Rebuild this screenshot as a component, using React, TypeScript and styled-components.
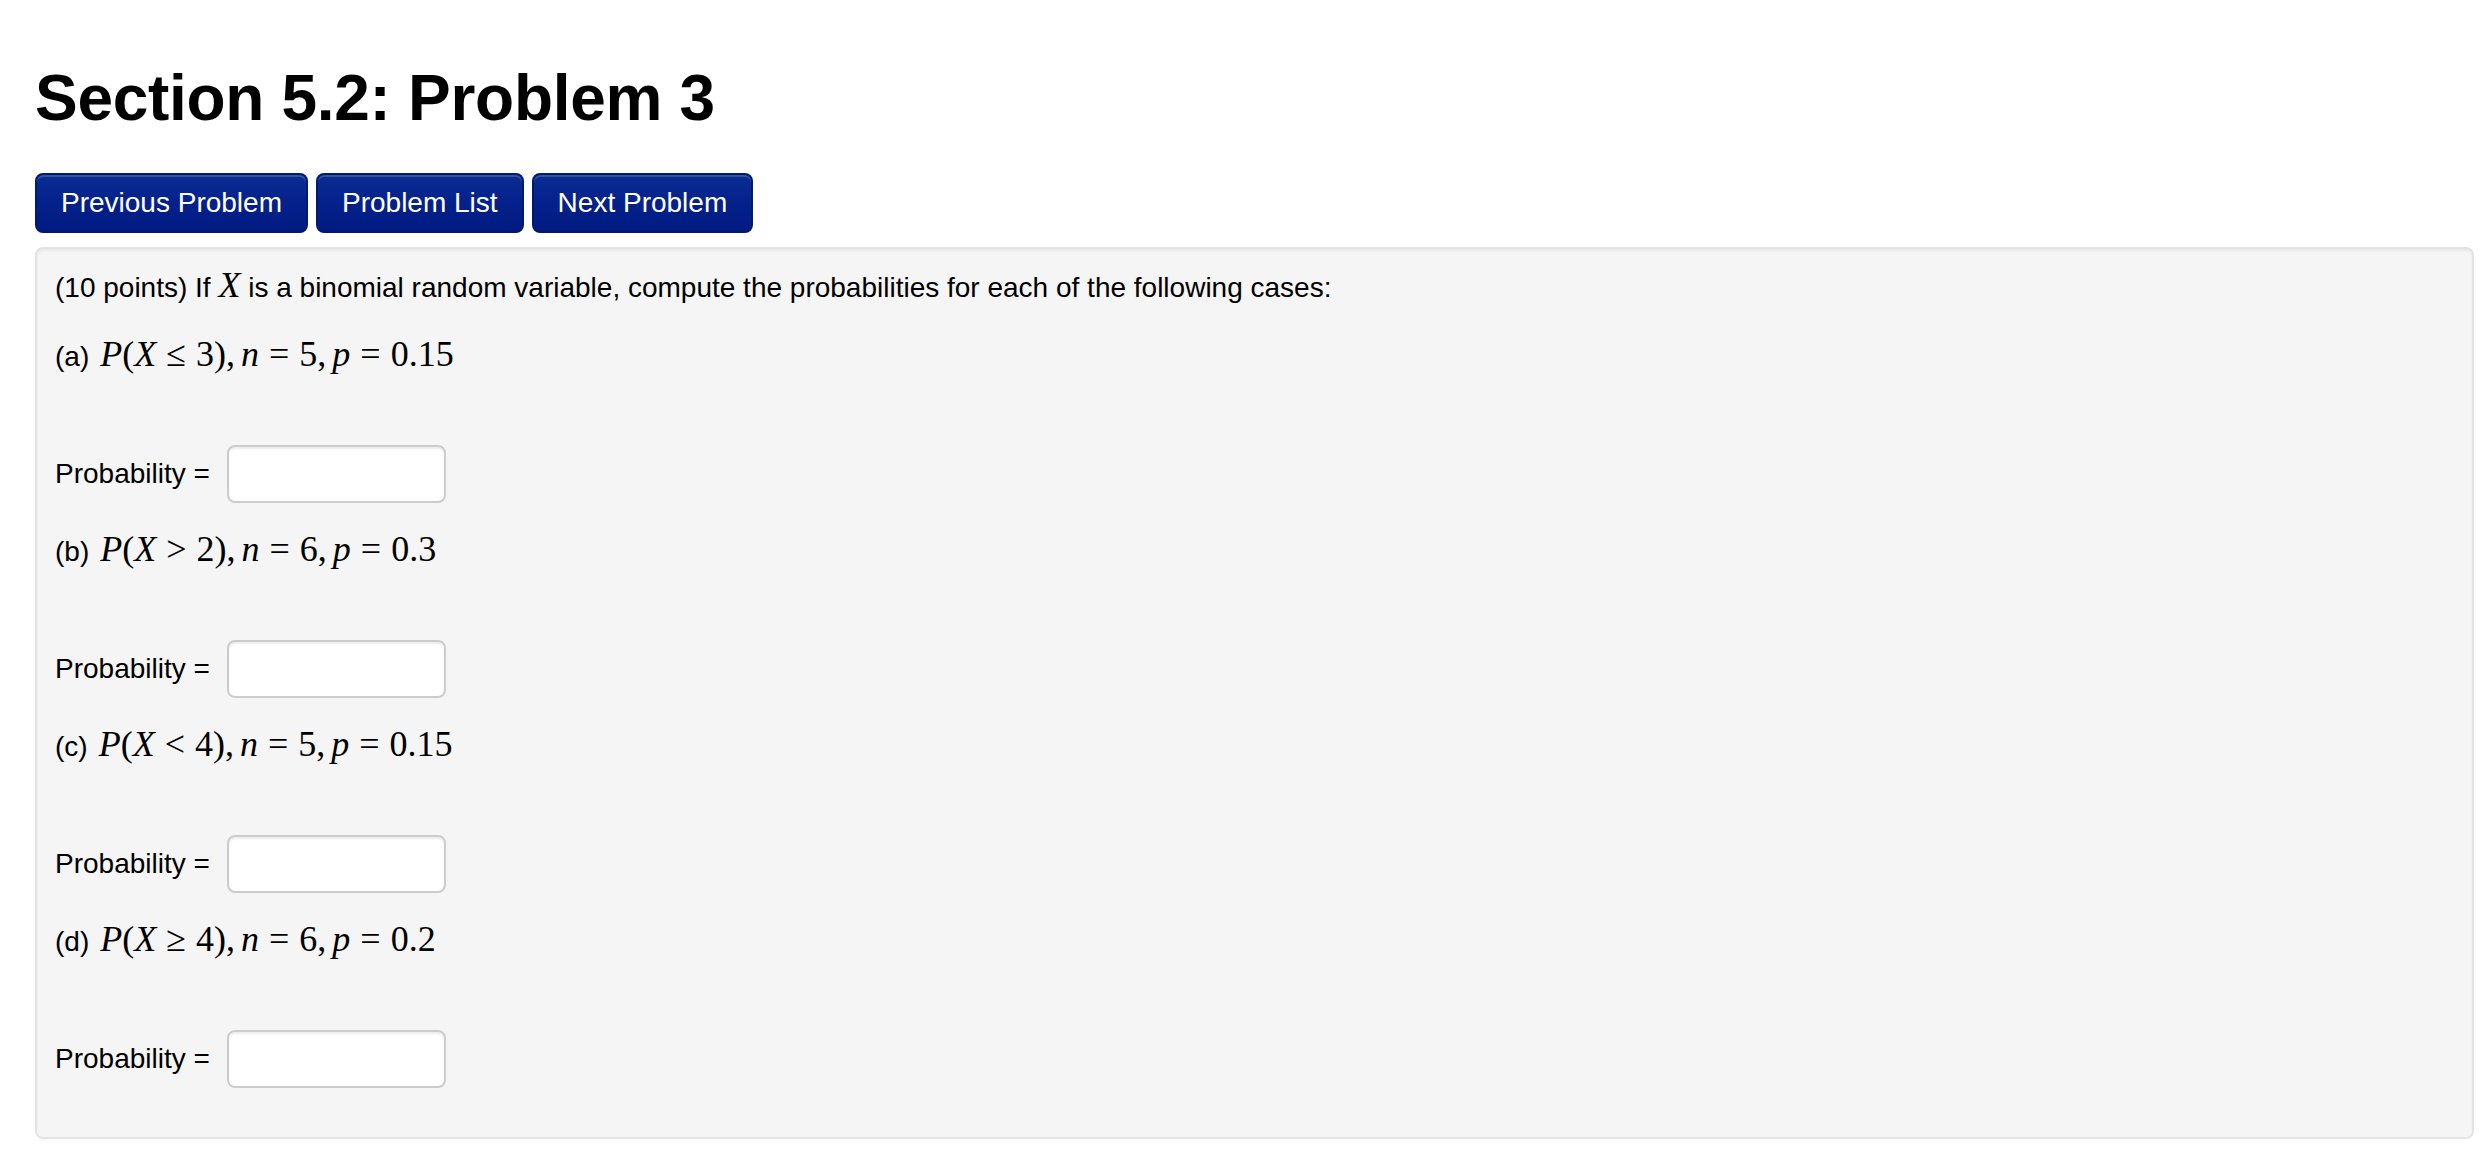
import React from "react";
import styled, { createGlobalStyle } from "styled-components";

const GlobalStyle = createGlobalStyle`
  html, body {
    margin: 0;
    padding: 0;
    background: #ffffff;
  }
  body {
    font-family: "Liberation Sans", Arial, Helvetica, sans-serif;
    color: #000000;
  }
  * { box-sizing: border-box; }
`;

const Page = styled.div`
  padding: 58px 16px 14px 35px;
`;

const Title = styled.h2`
  margin: 0 0 35px 0;
  font-family: "Liberation Sans", Arial, Helvetica, sans-serif;
  font-weight: 700;
  font-size: 64px;
  line-height: 80px;
  letter-spacing: -0.3px;
  color: #000;
`;

const NavBar = styled.div`
  display: flex;
  gap: 8px;
  margin-bottom: 14px;
`;

const NavButton = styled.button`
  height: 60px;
  padding: 0 24px;
  border: 2px solid #001a6e;
  border-radius: 8px;
  background: linear-gradient(to bottom, #0b2d92 0%, #05228c 45%, #001a80 100%);
  box-shadow: inset 0 2px 0 rgba(255, 255, 255, 0.18);
  color: #ffffff;
  font-family: "Liberation Sans", Arial, Helvetica, sans-serif;
  font-size: 28px;
  line-height: 40px;
  cursor: pointer;
`;

const Well = styled.div`
  background: #f5f5f5;
  border: 2px solid #e3e3e3;
  border-radius: 8px;
  box-shadow: inset 0 2px 2px rgba(0, 0, 0, 0.05);
  padding: 19px 18px 49px 18px;
  display: flex;
  flex-direction: column;
  gap: 29px;
  font-size: 28px;
  line-height: 40px;
`;

const Line = styled.div`
  height: 40px;
  font-size: 28px;
  line-height: 40px;
  white-space: nowrap;
`;

const Part = styled.div`
  display: flex;
  flex-direction: column;
  gap: 68px;
`;

const Math = styled.span<{ $lead?: number }>`
  font-family: "Liberation Serif", "Times New Roman", Times, serif;
  font-size: 36px;
  line-height: 0.8;
  margin-left: ${(p) => p.$lead ?? 0}px;
`;

const Mi = styled.i`
  font-style: italic;
`;

const Rel = styled.span`
  margin: 0 0.278em;
`;

const Punct = styled.span`
  margin-right: 0.167em;
`;

const AnswerRow = styled.div`
  display: flex;
  align-items: center;
  height: 58px;
`;

const Label = styled.span`
  font-size: 28px;
  line-height: 40px;
`;

const AnswerInput = styled.input`
  width: 219px;
  height: 58px;
  margin: 0 0 0 17px;
  padding: 8px 12px;
  background: #ffffff;
  border: 2px solid #cccccc;
  border-radius: 8px;
  box-shadow: inset 0 2px 2px rgba(0, 0, 0, 0.075);
  font-family: "Liberation Sans", Arial, sans-serif;
  font-size: 28px;
  outline: none;
`;

type PartData = {
  label: string;
  rel: string;
  k: string;
  n: string;
  p: string;
};

const parts: PartData[] = [
  { label: "(a)", rel: "\u2264", k: "3", n: "5", p: "0.15" },
  { label: "(b)", rel: ">", k: "2", n: "6", p: "0.3" },
  { label: "(c)", rel: "<", k: "4", n: "5", p: "0.15" },
  { label: "(d)", rel: "\u2265", k: "4", n: "6", p: "0.2" },
];

function Expr({ d }: { d: PartData }) {
  return (
    <Math $lead={11}>
      <Mi>P</Mi>(<Mi>X</Mi>
      <Rel>{d.rel}</Rel>
      {d.k})<Punct>,</Punct>
      <Mi>n</Mi>
      <Rel>=</Rel>
      {d.n}
      <Punct>,</Punct>
      <Mi>p</Mi>
      <Rel>=</Rel>
      {d.p}
    </Math>
  );
}

export default function App() {
  return (
    <>
      <GlobalStyle />
      <Page>
        <Title>Section 5.2: Problem 3</Title>
        <NavBar>
          <NavButton>Previous Problem</NavButton>
          <NavButton>Problem List</NavButton>
          <NavButton>Next Problem</NavButton>
        </NavBar>
        <Well>
          <Line>
            (10 points) If{" "}
            <Math>
              <Mi>X</Mi>
            </Math>{" "}
            is a binomial random variable, compute the probabilities for each of the following cases:
          </Line>
          {parts.map((d) => (
            <Part key={d.label}>
              <Line>
                {d.label}
                <Expr d={d} />
              </Line>
              <AnswerRow>
                <Label>Probability =</Label>
                <AnswerInput type="text" aria-label={`Probability ${d.label}`} />
              </AnswerRow>
            </Part>
          ))}
        </Well>
      </Page>
    </>
  );
}
